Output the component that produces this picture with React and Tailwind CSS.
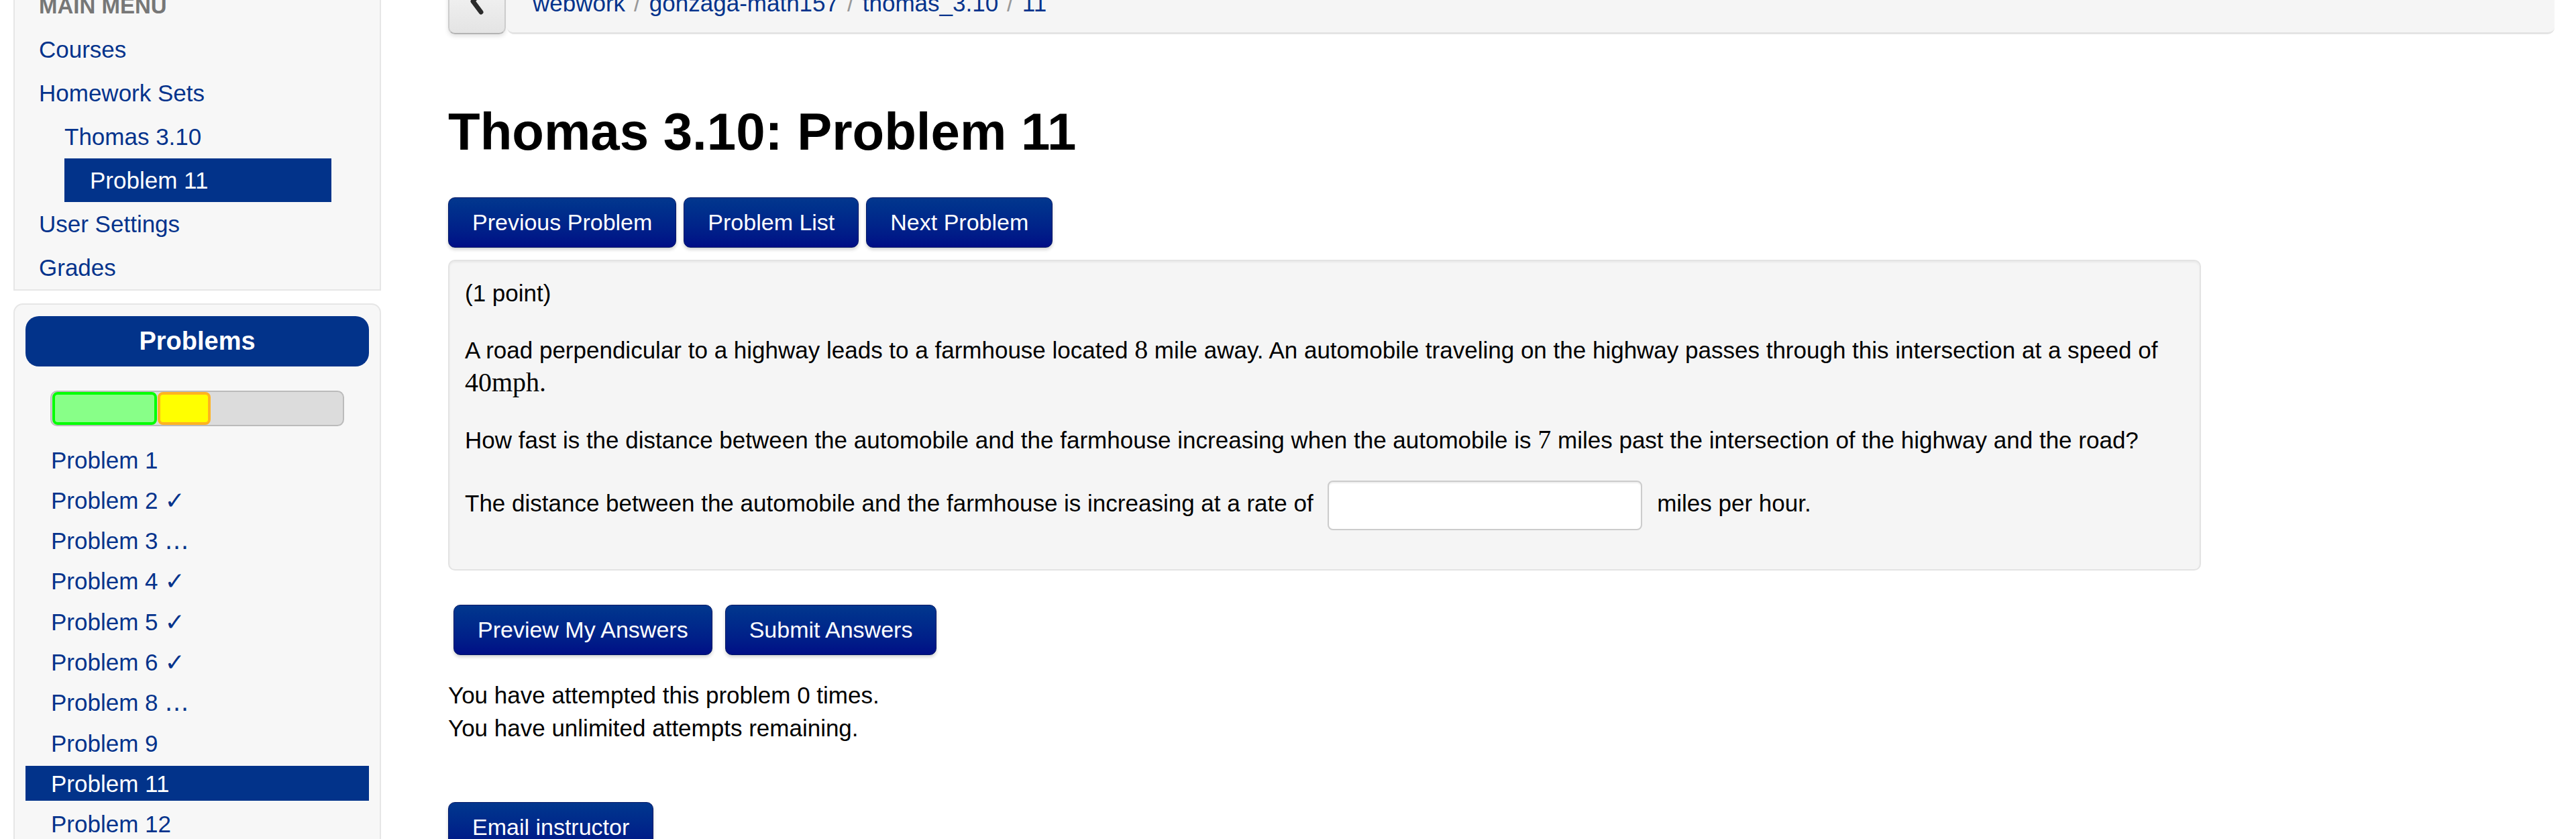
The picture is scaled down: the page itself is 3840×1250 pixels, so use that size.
import React from 'react';

const mainMenu = [
  { label: 'Courses', level: 0 },
  { label: 'Homework Sets', level: 0 },
  { label: 'Thomas 3.10', level: 1 },
  { label: 'Problem 11', level: 1, active: true },
  { label: 'User Settings', level: 0 },
  { label: 'Grades', level: 0 },
];

const problems = [
  { label: 'Problem 1', mark: '' },
  { label: 'Problem 2', mark: '✓' },
  { label: 'Problem 3', mark: '…' },
  { label: 'Problem 4', mark: '✓' },
  { label: 'Problem 5', mark: '✓' },
  { label: 'Problem 6', mark: '✓' },
  { label: 'Problem 8', mark: '…' },
  { label: 'Problem 9', mark: '' },
  { label: 'Problem 11', mark: '', active: true },
  { label: 'Problem 12', mark: '' },
];

const crumbs = ['webwork', 'gonzaga-math157', 'thomas_3.10', '11'];

const Btn = ({ children, className = '' }) => (
  <button
    className={`h-[75px] px-[35px] rounded-[10px] bg-linear-to-b from-[#03378e] to-[#000d86] border border-[#001766] text-white text-[34px] leading-[49px] shadow-[0_3px_5px_rgba(0,0,0,0.18)] whitespace-nowrap ${className}`}
  >
    {children}
  </button>
);

const M = ({ children }) => (
  <span className="font-['Liberation_Serif',serif] text-[40px] leading-none">{children}</span>
);

export default function App() {
  return (
    <div className="w-[3840px] h-[1250px] overflow-hidden bg-white font-['Liberation_Sans',Arial,sans-serif] text-[35px] leading-[49px] text-[#111]">
      <div className="-mt-[40px] flex">
        {/* Sidebar */}
        <aside className="ml-[20px] w-[548px] shrink-0 flex flex-col">
          <div className="border-2 border-[#e6e6e6] bg-[#f7f7f7] pt-[22px]">
            <div className="pl-[36px] text-[33px] leading-[49px] font-bold text-[#777] uppercase">Main Menu</div>
            <ul className="mt-[8px]">
              {mainMenu.map((item) => (
                <li
                  key={item.label}
                  className={
                    item.level === 1
                      ? `ml-[74px] w-[398px] h-[65px] flex items-center ${item.active ? 'pl-[38px] bg-[#02338a] text-white' : 'text-[#04338c]'}`
                      : 'h-[65px] flex items-center pl-[36px] text-[#04338c]'
                  }
                >
                  {item.label}
                </li>
              ))}
            </ul>
          </div>

          <div className="mt-[19px] border-2 border-[#e6e6e6] bg-[#f7f7f7] rounded-[14px] px-[16px] pt-[17px] pb-[40px]">
            <div className="h-[75px] rounded-[20px] bg-[#02338a] flex items-center justify-center text-white text-[38px] font-bold">
              Problems
            </div>
            <div className="mt-[36px] mx-auto w-[438px] h-[53px] border-2 border-[#bbbbbb] bg-[#dcdcdc] rounded-[10px] flex pl-[1px]">
              <div className="w-[156px] h-full border-[4px] border-[#00ff00] bg-[#88ff88] rounded-[8px]" />
              <div className="w-[79px] h-full ml-[1px] border-[4px] border-[#ffb320] bg-[#ffff00] rounded-[8px]" />
            </div>
            <ul className="mt-[24px] flex flex-col gap-[8.3px]">
              {problems.map((p) => (
                <li
                  key={p.label}
                  className={`h-[52px] flex items-center pl-[38px] ${p.active ? 'bg-[#02338a] text-white' : 'text-[#04338c]'}`}
                >
                  {p.label}
                  {p.mark && <span className="ml-[10px] font-['DejaVu_Sans',sans-serif] text-[36px]">{p.mark}</span>}
                </li>
              ))}
            </ul>
          </div>
        </aside>

        {/* Main */}
        <main className="ml-[100px] flex-1 mr-[32px]">
          <div className="flex h-[91px]">
            <div className="w-[86px] h-full border-2 border-[#cccccc] border-b-[#b3b3b3] rounded-b-[10px] bg-linear-to-b from-[#f7f7f7] to-[#e4e4e4] flex justify-center items-start pt-[20px] shadow-[0_3px_6px_rgba(0,0,0,0.12)]">
              <svg width="24" height="40" viewBox="0 0 24 40">
                <path d="M18 4 L6 20 L18 36" fill="none" stroke="#2b2b2b" strokeWidth="7" strokeLinecap="round" strokeLinejoin="round" />
              </svg>
            </div>
            <div className="ml-[2px] flex-1 h-full bg-[#f5f5f5] border-b-[3px] border-[#e4e4e4] rounded-b-[10px] flex items-end pl-[38px] pb-[19px]">
              {crumbs.map((c, i) => (
                <span key={c} className="flex">
                  <span className="text-[#04338c]">{c}</span>
                  {i < crumbs.length - 1 && <span className="px-[13px] text-[#999]">/</span>}
                </span>
              ))}
            </div>
          </div>

          <h1 className="mt-[106px] text-[78px] leading-none font-bold text-black">Thomas 3.10: Problem 11</h1>

          <div className="mt-[59px] flex gap-[11px]">
            <Btn>Previous Problem</Btn>
            <Btn>Problem List</Btn>
            <Btn>Next Problem</Btn>
          </div>

          <div className="mt-[18px] w-[2613px] bg-[#f5f5f5] border-2 border-[#e3e3e3] rounded-[10px] shadow-[inset_0_2px_3px_rgba(0,0,0,0.05)] px-[23px] pt-[23px] pb-[23px] text-black">
            <p className="mb-[36px]">(1 point)</p>
            <p className="mb-[36px]">
              A road perpendicular to a highway leads to a farmhouse located <M>8</M> mile away. An automobile traveling on the highway passes through this intersection at a speed of <M>40mph.</M>
            </p>
            <p className="mb-[36px]">
              How fast is the distance between the automobile and the farmhouse increasing when the automobile is <M>7</M> miles past the intersection of the highway and the road?
            </p>
            <p className="mb-[35px]">
              The distance between the automobile and the farmhouse is increasing at a rate of{' '}
              <input
                type="text"
                className="inline-block align-middle mx-[12px] w-[469px] h-[74px] bg-white border-2 border-[#cccccc] rounded-[8px] shadow-[inset_0_2px_2px_rgba(0,0,0,0.07)]"
              />{' '}
              miles per hour.
            </p>
          </div>

          <div className="mt-[51px] ml-[8px] flex gap-[19px]">
            <Btn>Preview My Answers</Btn>
            <Btn>Submit Answers</Btn>
          </div>

          <div className="mt-[35px] text-black">
            <p>You have attempted this problem 0 times.</p>
            <p>You have unlimited attempts remaining.</p>
          </div>

          <div className="mt-[86px]">
            <Btn>Email instructor</Btn>
          </div>
        </main>
      </div>
    </div>
  );
}
